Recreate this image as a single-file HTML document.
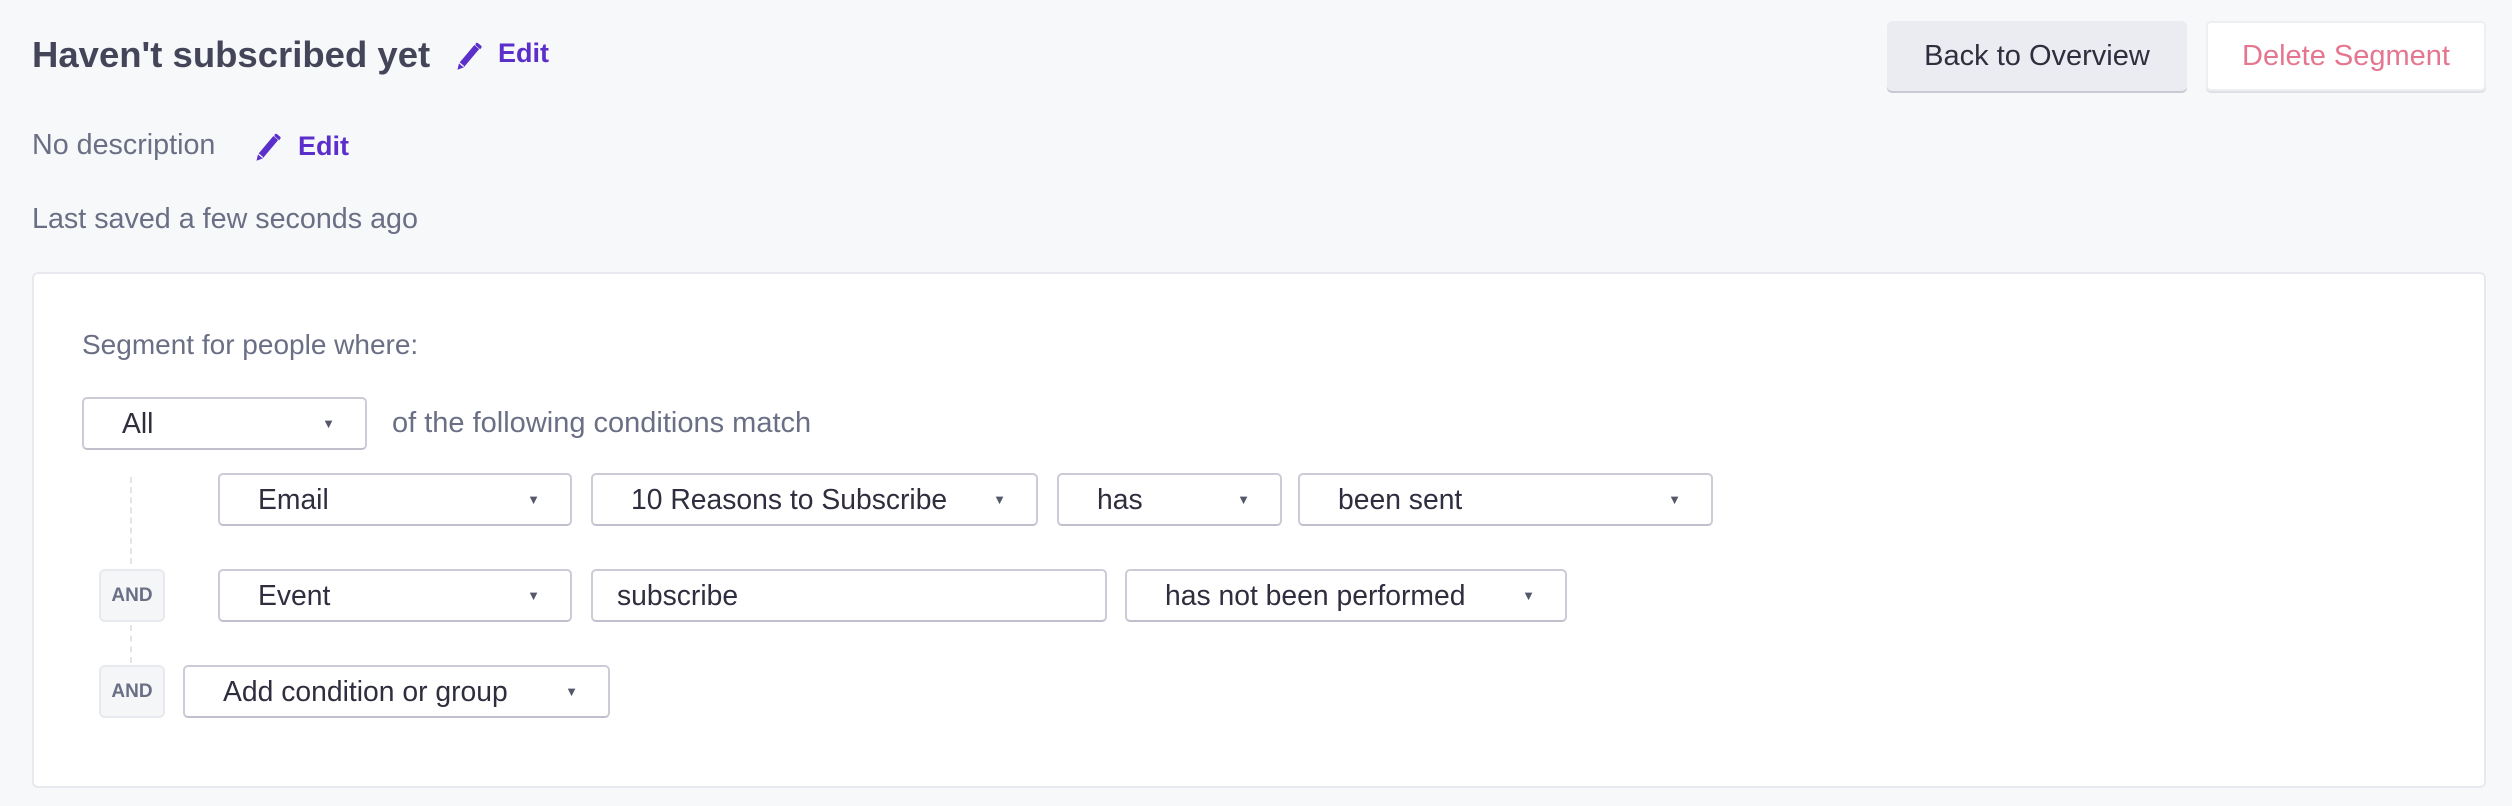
<!DOCTYPE html>
<html><head><meta charset="utf-8"><style>
*{box-sizing:border-box;margin:0;padding:0}
body{width:2512px;height:806px;background:#f7f8fa;font-family:"Liberation Sans",sans-serif;position:relative;overflow:hidden;color:#2e2e3e}
.a{position:absolute;white-space:nowrap}
.title{left:32px;top:33px;font-size:36.5px;font-weight:bold;color:#45455a;line-height:44px}
.edit{color:#5b2fc9;font-weight:bold;font-size:27px}
.muted{color:#6b6f85;font-size:28.7px}
.btn{position:absolute;top:21px;height:70px;border-radius:5px;font-size:29px;display:flex;align-items:center;justify-content:center}
.card{position:absolute;left:32px;top:272px;width:2454px;height:516px;background:#fff;border:2px solid #e8e9ee;border-radius:6px}
.sel{position:absolute;height:53px;border:2px solid #cbccd7;border-bottom-color:#bfc0cc;border-radius:5px;background:#fff;font-size:28.3px;display:flex;align-items:center;color:#2e2e3e}
.sel .t{position:absolute;left:38px}
.sel .ar{position:absolute;right:30px;font-size:13px;color:#55586a}
.and{position:absolute;left:99px;width:66px;height:53px;background:#f5f6f8;border:2px solid #e8e9ee;border-radius:6px;font-size:19px;font-weight:bold;color:#6b6f85;display:flex;align-items:center;justify-content:center}
.dash{position:absolute;left:130px;width:0;border-left:2px dashed #e3e4ea}
</style></head><body>
<div class="a title">Haven't subscribed yet</div>
<svg class="a" style="left:455px;top:40px" width="30" height="32" viewBox="0 0 24 24"><path fill="#5b2fc9" d="M2 23l1.2-5.2L15.5 3.2l3.8 3.3L7 21.1zM16.6 1.9a1.3 1.3 0 011.8-.2l2.4 2a1.3 1.3 0 01.2 1.8l-.9 1.1-3.8-3.3z"/><path stroke="#fff" stroke-width="1" d="M3.5 17.5l3.5 3"/></svg>
<div class="a edit" style="left:498px;top:38px">Edit</div>
<div class="btn" style="left:1887px;width:300px;background:#ebecf1;box-shadow:0 2px 0 #c8c9d3;color:#2e2e3e">Back to Overview</div>
<div class="btn" style="left:2206px;width:280px;background:#fff;border:2px solid #eeeff3;box-shadow:0 2px 0 #dfe0e6;color:#e5768f">Delete Segment</div>
<div class="a muted" style="left:32px;top:129px">No description</div>
<svg class="a" style="left:254px;top:131px" width="30" height="32" viewBox="0 0 24 24"><path fill="#5b2fc9" d="M2 23l1.2-5.2L15.5 3.2l3.8 3.3L7 21.1zM16.6 1.9a1.3 1.3 0 011.8-.2l2.4 2a1.3 1.3 0 01.2 1.8l-.9 1.1-3.8-3.3z"/><path stroke="#fff" stroke-width="1" d="M3.5 17.5l3.5 3"/></svg>
<div class="a edit" style="left:298px;top:131px">Edit</div>
<div class="a muted" style="left:32px;top:203px">Last saved a few seconds ago</div>
<div class="card"></div>
<div class="a muted" style="left:82px;top:329px;font-size:28px">Segment for people where:</div>
<div class="sel" style="left:82px;top:397px;width:285px"><span class="t">All</span><span class="ar">▼</span></div>
<div class="a muted" style="left:392px;top:407px;font-size:29px">of the following conditions match</div>
<div class="dash" style="top:477px;height:87px"></div>
<div class="dash" style="top:625px;height:38px"></div>
<div class="sel" style="left:218px;top:473px;width:354px"><span class="t">Email</span><span class="ar">▼</span></div>
<div class="sel" style="left:591px;top:473px;width:447px"><span class="t">10 Reasons to Subscribe</span><span class="ar">▼</span></div>
<div class="sel" style="left:1057px;top:473px;width:225px"><span class="t">has</span><span class="ar">▼</span></div>
<div class="sel" style="left:1298px;top:473px;width:415px"><span class="t">been sent</span><span class="ar">▼</span></div>
<div class="and" style="top:569px">AND</div>
<div class="sel" style="left:218px;top:569px;width:354px"><span class="t">Event</span><span class="ar">▼</span></div>
<div class="sel" style="left:591px;top:569px;width:516px"><span class="t" style="left:24px">subscribe</span></div>
<div class="sel" style="left:1125px;top:569px;width:442px"><span class="t">has not been performed</span><span class="ar">▼</span></div>
<div class="and" style="top:665px">AND</div>
<div class="sel" style="left:183px;top:665px;width:427px"><span class="t">Add condition or group</span><span class="ar">▼</span></div>
</body></html>
